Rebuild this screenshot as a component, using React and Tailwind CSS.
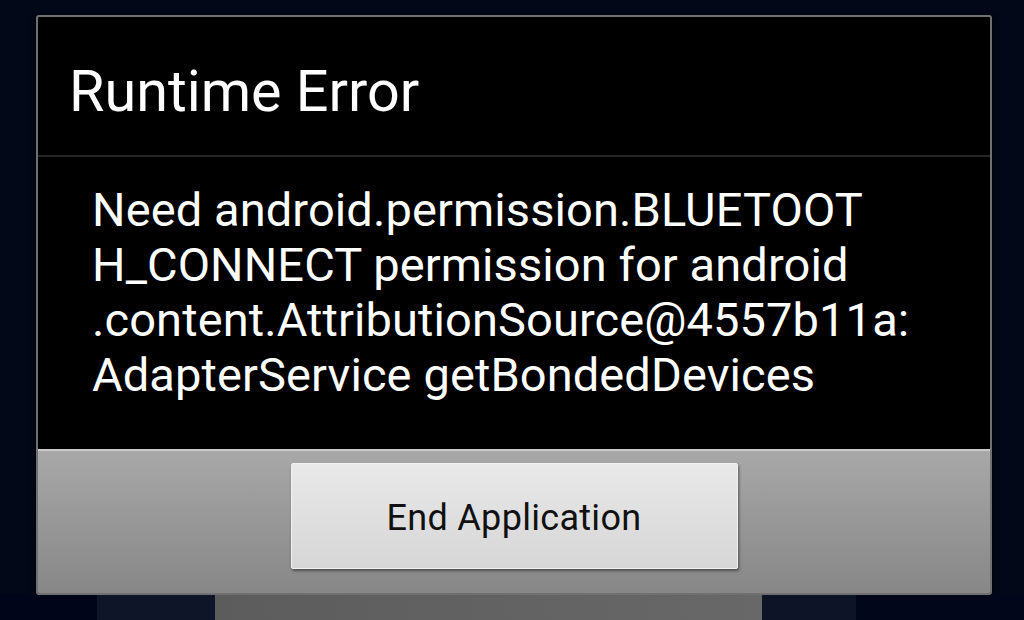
import React from 'react';

const MESSAGE = [
  'Need android.permission.BLUETOOT',
  'H_CONNECT permission for android',
  '.content.AttributionSource@4557b11a:',
  'AdapterService getBondedDevices',
];

export default function App() {
  return (
    <div className="w-[1024px] h-[620px] overflow-hidden bg-[#020817] flex flex-col" style={{ fontFamily: 'Roboto, "Noto Sans", sans-serif' }}>
      <div className="pt-[15px] pl-[36px]">
        {/* Dialog */}
        <div className="w-[956px] h-[580px] border-2 border-[#707070] rounded-[3px] flex flex-col bg-black overflow-hidden shadow-[0_2px_6px_rgba(0,0,0,0.6)]">
          <div className="h-[138px] flex items-center pl-[31px] pt-[12px]">
            <h1 className="text-[57.5px] leading-none text-white">Runtime Error</h1>
          </div>
          <div className="h-[2px] bg-[#262626]" />
          <div className="h-[292px] pl-[54px] pt-[25px] text-[47px] leading-[55px] text-white tracking-[0.1px]">
            {MESSAGE.map(l => (
              <div key={l} className="whitespace-nowrap">{l}</div>
            ))}
          </div>
          {/* Button bar */}
          <div className="flex-1 border-t-2 border-[#c9c9c9] bg-gradient-to-b from-[#a8a8a8] to-[#878787] flex justify-center pt-[12px]">
            <button className="w-[447px] h-[106px] rounded-[2px] bg-gradient-to-b from-[#e9e9e9] to-[#d6d6d6] border border-[#f2f2f2] shadow-[1px_2px_3px_rgba(0,0,0,0.45)] text-[36px] text-[#111] pt-[4px] tracking-[0.3px]">
              End Application
            </button>
          </div>
        </div>
      </div>
      {/* Blurred home screen peeking below */}
      <div className="flex flex-1">
        <div className="w-[97px] bg-[#01051a]" />
        <div className="w-[118px] bg-[#0f1529]" />
        <div className="w-[547px] bg-gradient-to-r from-[#5c5c5c] to-[#686868]" />
        <div className="w-[94px] bg-[#0e1428]" />
        <div className="flex-1 bg-[#01061a]" />
      </div>
    </div>
  );
}
